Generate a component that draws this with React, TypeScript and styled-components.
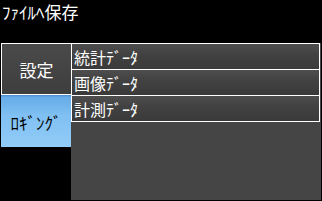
import React from 'react';
import styled, {createGlobalStyle} from "styled-components";

const GlobalStyle = createGlobalStyle`
  body {
    margin: 0;
    background: #000;
    font-family: "Noto Sans CJK JP", "DejaVu Sans", sans-serif;
  }
`

type TabType = {
    title: string
    active: boolean
}

const tabs: TabType[] = [
    {title: '設定', active: false},
    {title: 'ﾛｷﾞﾝｸﾞ', active: true},
]

const items = ['統計ﾃﾞｰﾀ', '画像ﾃﾞｰﾀ', '計測ﾃﾞｰﾀ']

export default function App() {
    return (
        <Screen>
            <GlobalStyle/>
            <Title>ﾌｧｲﾙﾍ保存</Title>
            <Main>
                <TabColumn>
                    {tabs.map(t => (
                        <Tab key={t.title} active={t.active}>{t.title}</Tab>
                    ))}
                </TabColumn>
                <Panel>
                    {items.map((item, i) => (
                        <Row key={item} last={i === items.length - 1}>{item}</Row>
                    ))}
                </Panel>
            </Main>
        </Screen>
    );
}

const Screen = styled.div`
  width: 322px;
  height: 201px;
  background: #000;
  display: flex;
  flex-direction: column;
  overflow: hidden;
`

const Title = styled.div`
  height: 42px;
  padding: 1px 0 0 2px;
  color: #fff;
  font-size: 17px;
  line-height: 22px;
`

const Main = styled.div`
  display: flex;
  flex: 1;
  padding: 0 1px 1px 1px;
`

const TabColumn = styled.div`
  width: 70px;
  display: flex;
  flex-direction: column;
`

const Tab = styled.div<{ active: boolean }>`
  height: 52px;
  box-sizing: border-box;
  display: flex;
  align-items: center;
  justify-content: center;
  font-size: 17px;
  color: ${props => props.active ? '#000' : '#fff'};
  background: ${props => props.active
    ? 'linear-gradient(#4a86c8 0px, #66ace8 2px, #80c0f2 40%, #92ccf8 100%)'
    : 'linear-gradient(#4a4a4a, #3e3e3e)'};
  border-top: ${props => props.active ? '0' : '1px solid #fff'};
  border-left: ${props => props.active ? '0' : '1px solid #fff'};
  border-bottom: ${props => props.active ? '0' : '1px solid #fff'};
  padding-top: ${props => props.active ? '2px' : '0'};
`

const Panel = styled.div`
  flex: 1;
  background: #454545;
  display: flex;
  flex-direction: column;
`

const Row = styled.div<{ last: boolean }>`
  height: ${props => props.last ? '27px' : '26px'};
  box-sizing: border-box;
  border: 1px solid #fff;
  border-bottom: ${props => props.last ? '1px solid #fff' : '0'};
  margin-right: 1px;
  padding-left: 2px;
  display: flex;
  align-items: center;
  color: #fff;
  font-size: 16px;
  background: linear-gradient(#4e4e4e, #424242 40%, #3a3a3a);
`
